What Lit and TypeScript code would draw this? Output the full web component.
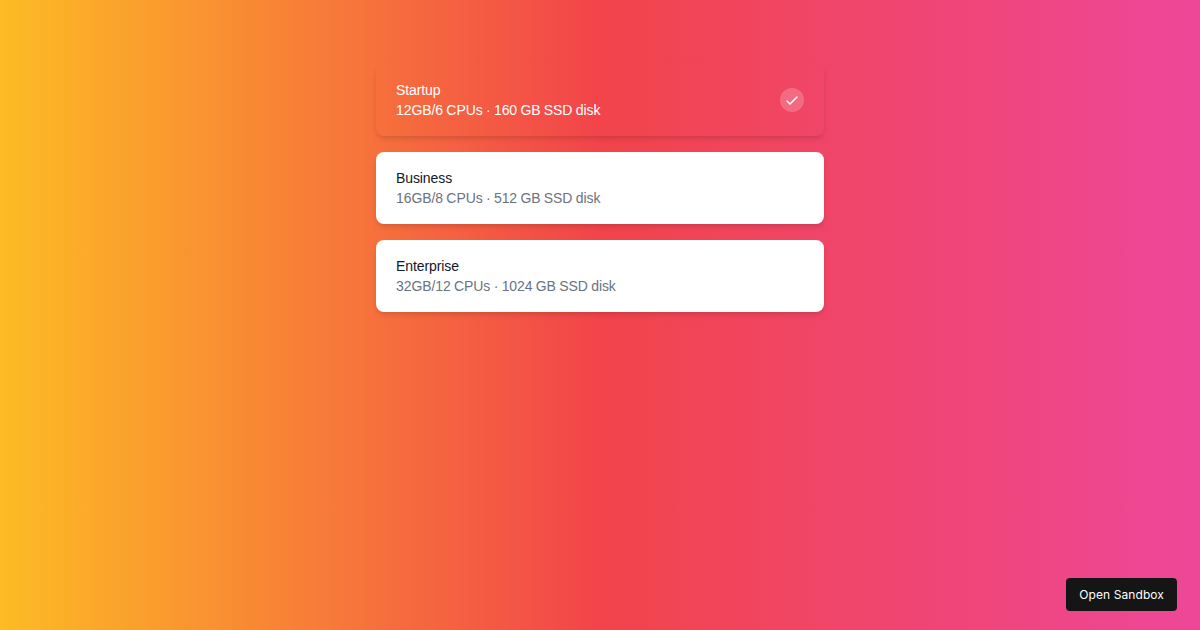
import { LitElement, html, css } from "lit";
import { customElement } from "lit/decorators.js";

const plans = [
  { name: "Startup", ram: "12GB", cpus: "6 CPUs", disk: "160 GB SSD disk", selected: true },
  { name: "Business", ram: "16GB", cpus: "8 CPUs", disk: "512 GB SSD disk", selected: false },
  { name: "Enterprise", ram: "32GB", cpus: "12 CPUs", disk: "1024 GB SSD disk", selected: false },
];

@customElement("app-root")
export class AppRoot extends LitElement {
  static styles = css`
    :host {
      display: block;
      position: relative;
      box-sizing: border-box;
      width: 100%;
      height: 100vh;
      overflow: hidden;
      padding: 64px 16px;
      background: linear-gradient(to right, #fdbb24, #f2444a, #ee4799);
      font-family: "Liberation Sans", Arial, sans-serif;
      font-size: 14px;
      line-height: 20px;
    }
    .list {
      display: flex;
      flex-direction: column;
      gap: 16px;
      width: 448px;
      margin: 0 auto;
    }
    .card {
      display: flex;
      align-items: center;
      justify-content: space-between;
      padding: 16px 20px;
      border-radius: 8px;
      background: #fff;
      box-shadow: 0 4px 6px -1px rgba(0, 0, 0, 0.1), 0 2px 4px -1px rgba(0, 0, 0, 0.06);
    }
    .card.selected {
      background: transparent;
    }
    .name {
      font-weight: 500;
      color: #111827;
      letter-spacing: -0.09px;
    }
    .desc {
      color: #6b7280;
      letter-spacing: -0.09px;
      word-spacing: -0.4px;
    }
    .selected .name,
    .selected .desc {
      color: #fff;
    }
    .check {
      display: block;
      width: 24px;
      height: 24px;
      flex-shrink: 0;
    }
    .sandbox {
      position: absolute;
      right: 23px;
      bottom: 19px;
      padding: 8px 13px;
      border-radius: 4px;
      background: #151515;
      color: #fff;
      font-family: Inter, "Liberation Sans", sans-serif;
      font-size: 12px;
      line-height: 17px;
      letter-spacing: 0.08px;
    }
  `;

  render() {
    return html`
      <div class="list">
        ${plans.map(
          (p) => html`
            <div class="card ${p.selected ? "selected" : ""}">
              <div>
                <div class="name">${p.name}</div>
                <div class="desc">${p.ram}/${p.cpus} · ${p.disk}</div>
              </div>
              ${p.selected
                ? html`<svg class="check" viewBox="0 0 24 24" fill="none">
                    <circle cx="12" cy="12" r="12" fill="#fff" opacity="0.2"></circle>
                    <path d="M7 13l3 3 7-7" stroke="#fff" stroke-width="1.5" stroke-linecap="round" stroke-linejoin="round"></path>
                  </svg>`
                : null}
            </div>
          `
        )}
      </div>
      <div class="sandbox">Open Sandbox</div>
    `;
  }
}
